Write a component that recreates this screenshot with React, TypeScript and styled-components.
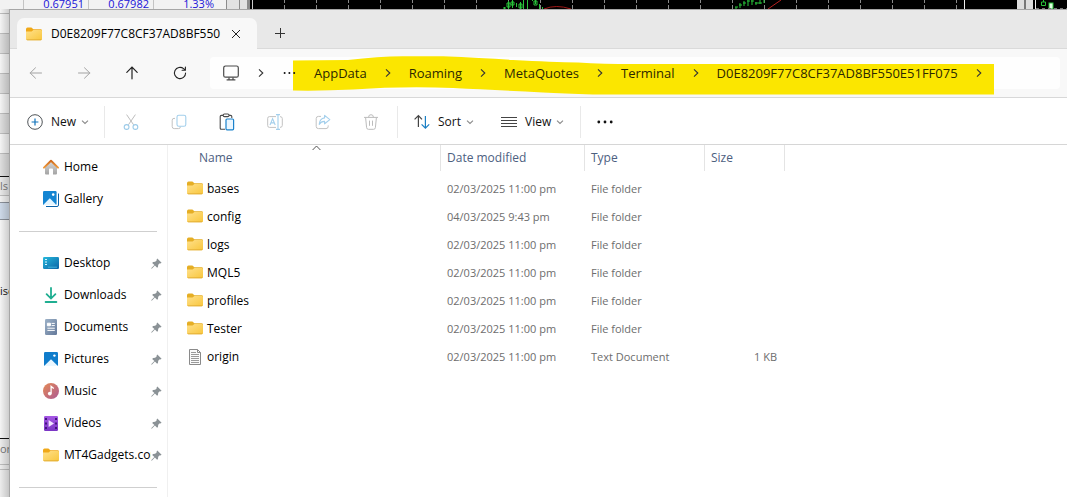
import React from 'react';
import styled, { createGlobalStyle, css } from 'styled-components';

const GlobalStyle = createGlobalStyle`
  *, *::before, *::after { box-sizing: border-box; }
  html, body, #root { height: 100%; }
  body {
    margin: 0;
    overflow: hidden;
    background: #e6e6e6;
    color: #111;
    font-family: "Open Sans", "Noto Sans", sans-serif;
    font-size: 12px;
    line-height: 16px;
  }
  button {
    border: 0;
    padding: 0;
    background: none;
    color: inherit;
    font: inherit;
  }
  svg { display: block; flex: none; }
`;

/* ---------- desktop behind the window ---------- */

const Desktop = styled.div`
  display: flex;
  flex-direction: column;
  height: 100%;
`;

const TopStrip = styled.div`
  display: flex;
  flex: none;
  height: 9px;
  overflow: hidden;
  background: #f2f2f2;
`;

const Quotes = styled.div`
  display: flex;
  flex: none;
  width: 226px;
  padding-left: 23px;
`;

const Quote = styled.span`
  width: 65px;
  height: 9px;
  padding-right: 4px;
  border-left: 1px solid #c4c4c4;
  color: #1a12d8;
  font-size: 11px;
  line-height: 8px;
  text-align: right;
`;

const Splitter = styled.div`
  flex: none;
  width: 24px;
  border: solid #8c8c8c;
  border-width: 0 3px 0 1px;
  background: linear-gradient(90deg, #e2e2e2 0 12px, #8c8c8c 12px 13px, #e2e2e2 13px);
`;

const Chart = styled.div`
  flex: 1;
  min-width: 0;
  overflow: hidden;
  background: #000;
`;

const Below = styled.div`
  display: flex;
  flex: 1;
  min-height: 0;
`;

const LeftStrip = styled.div`
  display: flex;
  flex-direction: column;
  flex: none;
  width: 9px;
  overflow: hidden;
  white-space: nowrap;
  font-size: 11px;
  position: relative;
  &::after {
    content: '';
    position: absolute;
    inset: 0;
    background: linear-gradient(90deg, rgba(0, 0, 0, 0), rgba(0, 0, 0, 0.16));
  }
`;

const Slice = styled.div<{ $h: number; $bg: string; $line?: string; $ink?: string }>`
  display: flex;
  align-items: center;
  flex: none;
  height: ${(p) => p.$h}px;
  background: ${(p) => p.$bg};
  color: ${(p) => p.$ink ?? '#111'};
  border-bottom: 1px solid ${(p) => p.$line ?? '#bdbdbd'};
`;

/* ---------- explorer window ---------- */

const Window = styled.div`
  display: flex;
  flex-direction: column;
  flex: 1;
  min-width: 0;
  border: solid #a6a6a6;
  border-width: 1px 0 0 1px;
  background: #fff;
`;

const TabBar = styled.div`
  display: flex;
  align-items: flex-end;
  flex: none;
  height: 39px;
  padding-left: 7px;
  border-bottom: 1px solid #dadada;
  background: #e8e8e8;
`;

const Tab = styled.div`
  display: flex;
  align-items: center;
  width: 240px;
  height: 31px;
  margin-bottom: -1px;
  padding: 0 16px 0 9px;
  border-radius: 7px 7px 0 0;
  background: #f8f8f8;
  color: #000;
  white-space: nowrap;
`;

const TabTitle = styled.span`
  flex: 1;
  min-width: 0;
  margin-left: 9px;
  overflow: hidden;
`;

const NewTab = styled.button`
  display: grid;
  place-items: center;
  width: 45px;
  height: 30px;
`;

const AddressBar = styled.div`
  display: flex;
  align-items: center;
  flex: none;
  height: 49px;
  padding-right: 7px;
  border-bottom: 1px solid #d8d8d8;
  background: #f8f8f8;
`;

const NavButtons = styled.div`
  display: flex;
  flex: none;
  padding: 0 6px 0 2px;
`;

const NavButton = styled.button`
  display: grid;
  place-items: center;
  width: 48px;
  height: 32px;
  color: #222;
  &:disabled { color: #a2a2a2; }
`;

const Address = styled.nav`
  display: flex;
  align-items: center;
  flex: 1;
  min-width: 0;
  height: 32px;
  padding-left: 13px;
  border-radius: 4px;
  background: #fefefe;
`;

const PathRoot = styled.div`
  display: flex;
  align-items: center;
  flex: none;
  gap: 18px;
  width: 71px;
  position: relative;
  z-index: 1;
`;

const Crumbs = styled.ol`
  display: flex;
  align-items: center;
  flex: none;
  gap: 17px;
  margin: 0;
  padding: 0 0 0 20px;
  position: relative;
  list-style: none;
  font-size: 13px;
  line-height: 20px;
`;

const Crumb = styled.li`
  display: flex;
  align-items: center;
  gap: 17px;
  position: relative;
`;

const CrumbLink = styled.a`
  color: #2c2800;
  text-decoration: none;
`;

const Marker = styled.svg`
  position: absolute;
  left: -1px;
  top: -7px;
`;

const CommandBar = styled.div`
  display: flex;
  align-items: center;
  flex: none;
  height: 47px;
  padding: 2px 0 0 17px;
  border-bottom: 1px solid #d6d6d6;
`;

const Command = styled.button<{ $w: number }>`
  display: flex;
  align-items: center;
  width: ${(p) => p.$w}px;
  height: 32px;
  color: #111;
`;

const CommandLabel = styled.span`
  margin: 0 5px 0 8px;
`;

const IconCommand = styled.button`
  display: grid;
  place-items: center;
  width: 48px;
  height: 32px;
`;

const Rule = styled.span<{ $left?: number; $right?: number }>`
  width: 1px;
  height: 32px;
  background: #e9e9e9;
  margin: 0 ${(p) => p.$right ?? 0}px 0 ${(p) => p.$left ?? 0}px;
`;

const Body = styled.div`
  display: flex;
  flex: 1;
  min-height: 0;
`;

const Sidebar = styled.nav`
  flex: none;
  width: 158px;
  padding-top: 6px;
  border-right: 1px solid #f0f0f0;
  overflow: hidden;
`;

const SideItem = styled.a`
  display: flex;
  align-items: center;
  height: 32px;
  padding: 0 5px 0 33px;
  color: #000;
  text-decoration: none;
  white-space: nowrap;
`;

const SideLabel = styled.span`
  flex: 1;
  min-width: 0;
  margin-left: 5px;
  overflow: hidden;
`;

const SideRule = styled.hr`
  height: 1px;
  margin: 16px 10px 15px 9px;
  border: 0;
  background: #cfcfcf;
`;

const Files = styled.main`
  flex: 1;
  min-width: 0;
  overflow: hidden;
`;

const FileTable = styled.table`
  width: 100%;
  table-layout: fixed;
  border-collapse: separate;
  border-spacing: 0;
  white-space: nowrap;
  thead::after {
    content: '';
    display: block;
    height: 4px;
  }
`;

const Col = styled.col<{ $w?: number }>`
  ${(p) => p.$w && css`width: ${p.$w}px;`}
`;

const HeadCell = styled.th<{ $first?: boolean; $last?: boolean }>`
  height: 26px;
  padding: 0 0 0 ${(p) => (p.$first ? 23 : 0)}px;
  border-right: ${(p) => (p.$last ? 0 : 1)}px solid #e4e4e4;
  font-weight: 400;
`;

const HeadButton = styled.button<{ $pad?: number }>`
  display: flex;
  align-items: center;
  width: 100%;
  height: 26px;
  padding-left: ${(p) => p.$pad ?? 6}px;
  position: relative;
  color: #4c607f;
`;

const SortMark = styled.svg`
  position: absolute;
  top: 0;
  left: calc(50% - 4px);
`;

const Cell = styled.td<{ $right?: boolean }>`
  height: 28px;
  padding: 0 8px 0 6px;
  color: #6d6d6d;
  font-size: 11px;
  text-align: ${(p) => (p.$right ? 'right' : 'left')};
`;

const NameCell = styled(Cell)`
  padding: 0 0 0 19px;
  color: #000;
  font-size: 12px;
`;

const FileName = styled.div`
  display: flex;
  align-items: center;
  gap: 4px;
`;

/* ---------- icons ---------- */

const Folder = ({ id, tall }: { id: string; tall?: boolean }) => (
  <svg width="16" height="16" viewBox={tall ? '0 0 16 16' : '0 1 16 16'}>
    <defs>
      <linearGradient id={id} x1="0" y1="0" x2="1" y2="1">
        <stop offset="0" stopColor="#ffe08a" />
        <stop offset="1" stopColor="#f8c63c" />
      </linearGradient>
    </defs>
    <path d="M0 3.2Q0 1.6 1.5 1.6H5.4L7.4 3.2H14.6Q16 3.2 16 4.6V8H0Z" fill={tall ? '#f0a818' : '#e5ae25'} />
    <path d="M0 5.4H5.6L7.4 4.1H15Q16 4.1 16 5.2V13Q16 14.3 14.7 14.3H1.3Q0 14.3 0 13Z" fill={`url(#${id})`} />
    <path d="M.4 13.6Q.8 14.3 1.4 14.3H14.6Q15.3 14.3 15.7 13.6Z" fill="#dca32a" />
  </svg>
);

const TextFile = () => (
  <svg width="16" height="16" viewBox="0 0 16 16">
    <path d="M2.5.5H10.5L13.5 3.5V15.5H2.5Z" fill="#fafafa" stroke="#8a8a8a" />
    <path d="M10.5.5V3.5H13.5" fill="none" stroke="#8a8a8a" />
    <path d="M4 3.5H9M4 5.5H12M4 7.5H12M4 9.5H12M4 11.5H12M4 13.5H12" stroke="#9a9a9a" />
  </svg>
);

const Chevron = ({ dir, size = 8, color = '#333' }: { dir: 'right' | 'down'; size?: number; color?: string }) => (
  <svg width={size} height={size} viewBox="0 0 8 8" fill="none" stroke={color} strokeWidth="1.1">
    <path d={dir === 'right' ? 'M2 0.4L5.8 4L2 7.6' : 'M1 2.6L4 5.4L7 2.6'} />
  </svg>
);

const Pin = () => (
  <svg width="11" height="11" viewBox="0 0 11 11" fill="#8b9296">
    <path d="M6.3.4L10.6 4.7L9.4 5.4L8.8 5.2L7.2 6.8L7 8.9L6.1 9.8L3.9 7.6L1 10.6L.3 10.7L.4 10L3.4 7.1L1.2 4.9L2.1 4L4.2 3.8L5.8 2.2L5.6 1.6Z" />
  </svg>
);

const sideIcons: Record<string, React.ReactNode> = {
  Home: (
    <svg width="16" height="16" viewBox="0 0 16 16">
      <defs>
        <linearGradient id="house" x1="0" y1="0" x2="0" y2="1">
          <stop offset="0" stopColor="#d8d8d8" />
          <stop offset="1" stopColor="#a3a3a3" />
        </linearGradient>
        <linearGradient id="roof" x1="0" y1="0" x2="0" y2="1">
          <stop offset="0" stopColor="#cf6a1c" />
          <stop offset="1" stopColor="#f09a3a" />
        </linearGradient>
      </defs>
      <path d="M8 2.5L14 8V14.6Q14 15.6 13 15.6H10V10.4Q10 9.6 9.2 9.6H6.8Q6 9.6 6 10.4V15.6H3Q2 15.6 2 14.6V8Z" fill="url(#house)" />
      <path d="M1 8.6L8 1.8L15 8.6" fill="none" stroke="url(#roof)" strokeWidth="2" strokeLinecap="round" strokeLinejoin="round" />
    </svg>
  ),
  Gallery: (
    <svg width="16" height="16" viewBox="0 0 16 16">
      <path d="M3 15.5H14Q15.5 15.5 15.5 14V2.5" fill="none" stroke="#0b62a8" strokeWidth="1" />
      <rect width="13.6" height="14" rx="1.2" fill="#1485d2" />
      <path d="M.6 13.6L6.8 7.2L13 13.6Q12.8 14 12.4 14H1.2Q.8 14 .6 13.6Z" fill="#e4f5ff" />
      <circle cx="10.2" cy="3.6" r="1.3" fill="#fff" />
    </svg>
  ),
  Desktop: (
    <svg width="16" height="16" viewBox="0 0 16 16">
      <defs>
        <linearGradient id="screen" x1="0" y1="0" x2="1" y2="1">
          <stop offset="0" stopColor="#26b9dc" />
          <stop offset="1" stopColor="#0b62a6" />
        </linearGradient>
      </defs>
      <rect y="2" width="16" height="12" rx="1.2" fill="url(#screen)" />
      <path d="M2 4.5H4M2 7H4M2 9.5H4" stroke="#d8f6ff" strokeWidth="1.1" />
      <path d="M5 12.2H14" stroke="#4fbfe2" strokeWidth=".8" />
    </svg>
  ),
  Downloads: (
    <svg width="16" height="16" viewBox="0 0 16 16" fill="none" stroke="#1fae91" strokeWidth="1.8" strokeLinecap="round">
      <path d="M8 1V11.4M3.6 7.2L8 11.6L12.4 7.2M2.6 15H13.4" />
    </svg>
  ),
  Documents: (
    <svg width="16" height="16" viewBox="0 0 16 16">
      <defs>
        <linearGradient id="sheet" x1="0" y1="0" x2="1" y2="1">
          <stop offset="0" stopColor="#9db2c8" />
          <stop offset="1" stopColor="#64799a" />
        </linearGradient>
      </defs>
      <rect x="2" width="12" height="16" rx="1.2" fill="url(#sheet)" />
      <path d="M4.4 4.2H7.4V6.8H4.4ZM8.6 4.4H11.8M8.6 6.6H11.8M4.4 9.2H11.8M4.4 11.4H11.8" fill="#fff" stroke="#fff" />
    </svg>
  ),
  Pictures: (
    <svg width="16" height="16" viewBox="0 0 16 16">
      <rect x="1" y="1" width="14" height="14" rx="1.2" fill="#0f7ccb" />
      <path d="M1.6 14.5L8 8.2L14.4 14.5Q14.2 15 13.8 15H2.2Q1.8 15 1.6 14.5Z" fill="#eaf7ff" />
      <circle cx="11.4" cy="4.6" r="1.2" fill="#fff" />
    </svg>
  ),
  Music: (
    <svg width="16" height="16" viewBox="0 0 16 16">
      <defs>
        <linearGradient id="disc" x1="0" y1="0" x2="1" y2="1">
          <stop offset="0" stopColor="#e58a55" />
          <stop offset="1" stopColor="#ac5a94" />
        </linearGradient>
      </defs>
      <circle cx="8" cy="8" r="8" fill="url(#disc)" />
      <circle cx="6.8" cy="10.6" r="1.9" fill="#fff" />
      <path d="M8.1 10.6V3.4L10.8 5.4" fill="none" stroke="#fff" strokeWidth="1.3" />
    </svg>
  ),
  Videos: (
    <svg width="16" height="16" viewBox="0 0 16 16">
      <defs>
        <linearGradient id="film" x1="0" y1="0" x2="0" y2="1">
          <stop offset="0" stopColor="#a557e4" />
          <stop offset="1" stopColor="#7a35c4" />
        </linearGradient>
      </defs>
      <rect x="1" y="1" width="14" height="15" rx="1.2" fill="url(#film)" />
      <path d="M2 3H4V5H2ZM2 7.5H4V9.5H2ZM2 12H4V14H2ZM12 3H14V5H12ZM12 7.5H14V9.5H12ZM12 12H14V14H12Z" fill="#43157e" />
      <path d="M5.6 5L11 8.5L5.6 12Z" fill="#f1e4ff" />
    </svg>
  ),
  'MT4Gadgets.com': <Folder id="side-folder" tall />,
};

const BackIcon = ({ flip }: { flip?: boolean }) => (
  <svg width="14" height="14" viewBox="0 0 14 14" fill="none" stroke="currentColor" strokeLinecap="round">
    <path d={flip ? 'M1.5 7H12.8M7.5 1.8L12.8 7L7.5 12.2' : 'M12.5 7H1.2M6.5 1.8L1.2 7L6.5 12.2'} />
  </svg>
);

const UpIcon = () => (
  <svg width="14" height="14" viewBox="0 0 14 14" fill="none" stroke="currentColor" strokeWidth="1.2" strokeLinecap="round">
    <path d="M7 12.8V1.4M1.8 6.4L7 1.2L12.2 6.4" />
  </svg>
);

const RefreshIcon = () => (
  <svg width="14" height="14" viewBox="0 0 14 14" fill="none" stroke="currentColor" strokeWidth="1.1" strokeLinecap="round">
    <path d="M12.6 7A5.6 5.6 0 1 1 10.6 2.7L12.3 4.2M12.4 1V4.3H9.1" />
  </svg>
);

const MonitorIcon = () => (
  <svg width="16" height="16" viewBox="0 0 16 16" fill="none" stroke="#4a4a4a" strokeWidth="1.2">
    <rect x=".7" y="1" width="14.6" height="11.2" rx="1.8" />
    <path d="M6 12.4V14.6M10 12.4V14.6M3.6 14.8H12.4" />
  </svg>
);

const Dots = ({ wide }: { wide?: boolean }) => (
  <svg width="16" height="4" viewBox="0 0 16 4" fill="#111">
    {(wide ? [1.8, 8, 14.2] : [1.6, 6.4, 11.2]).map((x) => (
      <circle key={x} cx={x} cy="2" r={wide ? 1.4 : 1} />
    ))}
  </svg>
);

const NewIcon = () => (
  <svg width="16" height="16" viewBox="0 0 16 16" fill="none">
    <circle cx="8" cy="8" r="7.3" stroke="#4f5458" />
    <path d="M8 4.6V11.4M4.6 8H11.4" stroke="#1173bb" strokeWidth="1.2" />
  </svg>
);

const CutIcon = () => (
  <svg width="16" height="16" viewBox="0 0 16 16" fill="none">
    <path d="M3.6 .6L10.6 10.8M12.4 .6L5.4 10.8" stroke="#bdbdbd" />
    <circle cx="3.6" cy="13" r="2.4" stroke="#9ccbe9" strokeWidth="1.1" />
    <circle cx="12.4" cy="13" r="2.4" stroke="#9ccbe9" strokeWidth="1.1" />
  </svg>
);

const CopyIcon = () => (
  <svg width="16" height="16" viewBox="0 0 16 16" fill="none">
    <path d="M4 4.4H3Q1.2 4.4 1.2 6.2V12.6Q1.2 14.6 3.2 14.6H7.6Q9.4 14.6 9.4 12.8" stroke="#c2c2c2" />
    <rect x="6" y="1.2" width="8.8" height="11" rx="1.8" stroke="#a3cfec" strokeWidth="1.1" />
  </svg>
);

const PasteIcon = () => (
  <svg width="16" height="18" viewBox="0 0 16 18" fill="none">
    <path d="M6 16.3H2.4Q1.2 16.3 1.2 15.1V3.6Q1.2 2.4 2.4 2.4H4M10 2.4H11.6Q12.8 2.4 12.8 3.6V5" stroke="#4b4b4b" strokeWidth="1.1" />
    <rect x="4.2" y="1" width="5.8" height="2.6" rx="1.2" stroke="#4b4b4b" strokeWidth="1.1" />
    <rect x="7" y="6" width="7.6" height="10.8" rx="1" stroke="#1a82cc" strokeWidth="1.2" fill="#eaf6ff" />
  </svg>
);

const RenameIcon = () => (
  <svg width="16" height="16" viewBox="0 0 16 16" fill="none">
    <path d="M9 2.6H2.4Q.7 2.6 .7 4.3V11.6Q.7 13.4 2.4 13.4H9M13 2.6Q15.3 2.6 15.3 4.6V11.4Q15.3 13.4 13 13.4" stroke="#c2c2c2" />
    <path d="M3 11L5.6 4.6L8.2 11M3.9 8.9H7.3M11 .6V15.4M9 .6H13M9 15.4H13" stroke="#a3cfec" strokeWidth="1.1" />
  </svg>
);

const ShareIcon = () => (
  <svg width="16" height="16" viewBox="0 0 16 16" fill="none">
    <path d="M6 2.4H3.4Q1.2 2.4 1.2 4.6V12.4Q1.2 14.6 3.4 14.6H11Q13.2 14.6 13.2 12.4V11.4" stroke="#c2c2c2" />
    <path d="M9.6 1.4L14.8 5.6L9.6 9.8V7.4Q6.2 7.2 4.2 10.4Q4.6 4.6 9.6 3.9Z" stroke="#a3cfec" strokeWidth="1.1" strokeLinejoin="round" />
  </svg>
);

const DeleteIcon = () => (
  <svg width="16" height="16" viewBox="0 0 16 16" fill="none" stroke="#bcbcbc">
    <path d="M1 3.4H15M5.6 3.2Q5.6 .7 8 .7T10.4 3.2M2.6 3.6L3.6 13.6Q3.8 15.3 5.4 15.3H10.6Q12.2 15.3 12.4 13.6L13.4 3.6M6.5 6.6V11.8M9.5 6.6V11.8" />
  </svg>
);

const SortIcon = () => (
  <svg width="16" height="16" viewBox="0 0 16 16" fill="none" strokeWidth="1.2">
    <path d="M4.4 13V1.8M.6 5.4L4.4 1.6L8 5.4" stroke="#444" />
    <path d="M11.4 2V14M7.6 10.4L11.4 14.2L15.2 10.4" stroke="#1a7fc4" />
  </svg>
);

const ViewIcon = () => (
  <svg width="16" height="16" viewBox="0 0 16 16" stroke="#444">
    <path d="M0 3.5H16M0 6.5H16M0 9.5H16M0 12.5H16" />
  </svg>
);

const gridLines = Array.from({ length: 23 }, (_, i) => 34 + i * 32).filter((x) => x < 710);

const ChartDrawing = () => (
  <svg width="817" height="9" viewBox="0 0 817 9" fill="none">
    <rect x="2" y="0" width="1" height="9" fill="#ccc" />
    {gridLines.map((x) => (
      <path key={x} d={`M${x + 0.5} 0V3M${x + 0.5} 5V9`} stroke="#8a8a8a" />
    ))}
    <path d="M254.5 7V9M258.5 1V9M262.5 0V8M266.5 3V7M270.5 2V9M273.5 0V9M277.5 0V9M282.5 0V1M285.5 0V4" stroke="#28c43a" />
    <path d="M253 8H256M257 3H260V7H257ZM261 2H264V5H261ZM269 4H272V8H269ZM284 1H287V5H284ZM289.5 4V9M292.5 7V9" stroke="#28c43a" />
    <path d="M294 9Q306 4 321 9" stroke="#a01818" />
    <path d="M486 7V9M490 3V8M494 1V6M498 0V6M502 0V5M506 2V5M510 0V4M514 0V3M485 7H488M489 5H492M493 3H496M497 1H500M501 1H504M505 3H512" stroke="#28c43a" />
    <path d="M518 9L531 0" stroke="#b81f1f" />
    <rect x="714" width="1" height="9" fill="#eee" />
    <rect x="767" width="16" height="9" fill="#dedede" />
    <rect x="774" width="2" height="9" fill="#777" />
    <rect x="785" width="1" height="9" fill="#eee" />
    <path d="M791.5 2H795.5V5.5H791.5ZM793.5 0V2" stroke="#28c43a" />
    <rect x="799" y="3" width="4" height="6" fill="#dfffdf" stroke="#28c43a" />
    <path d="M786 8.5H817" stroke="#777" strokeDasharray="3 3" />
  </svg>
);

/* ---------- data ---------- */

const crumbs = ['AppData', 'Roaming', 'MetaQuotes', 'Terminal', 'D0E8209F77C8CF37AD8BF550E51FF075'];

const pinned = ['Desktop', 'Downloads', 'Documents', 'Pictures', 'Music', 'Videos', 'MT4Gadgets.com'];

const files = [
  { name: 'bases', date: '02/03/2025 11:00 pm', type: 'File folder', size: '' },
  { name: 'config', date: '04/03/2025 9:43 pm', type: 'File folder', size: '' },
  { name: 'logs', date: '02/03/2025 11:00 pm', type: 'File folder', size: '' },
  { name: 'MQL5', date: '02/03/2025 11:00 pm', type: 'File folder', size: '' },
  { name: 'profiles', date: '02/03/2025 11:00 pm', type: 'File folder', size: '' },
  { name: 'Tester', date: '02/03/2025 11:00 pm', type: 'File folder', size: '' },
  { name: 'origin', date: '02/03/2025 11:00 pm', type: 'Text Document', size: '1 KB' },
];

const commands: [string, React.ReactNode][] = [
  ['Cut', <CutIcon />],
  ['Copy', <CopyIcon />],
  ['Paste', <PasteIcon />],
  ['Rename', <RenameIcon />],
  ['Share', <ShareIcon />],
  ['Delete', <DeleteIcon />],
];

export default function App() {
  return (
    <Desktop>
      <GlobalStyle />
      <TopStrip>
        <Quotes>
          <Quote>0.67951</Quote>
          <Quote>0.67982</Quote>
          <Quote>1.33%</Quote>
        </Quotes>
        <Splitter />
        <Chart><ChartDrawing /></Chart>
      </TopStrip>
      <Below>
        <LeftStrip>
          <Slice $h={5} $bg="#f4f4f4" />
          <Slice $h={20} $bg="#f4f4f4" />
          <Slice $h={20} $bg="#dedede" />
          <Slice $h={20} $bg="#f4f4f4" />
          <Slice $h={20} $bg="#dedede" />
          <Slice $h={20} $bg="#f4f4f4" />
          <Slice $h={20} $bg="#dedede" />
          <Slice $h={20} $bg="#f4f4f4" />
          <Slice $h={23} $bg="#dedede" $line="#111" />
          <Slice $h={19} $bg="#e8e8e8" $ink="#777">ls</Slice>
          <Slice $h={7} $bg="#f0f0f0" $line="#8a9099" />
          <Slice $h={17} $bg="#cdd9e8" $line="#8a9099" />
          <Slice $h={143} $bg="#f4f4f4" $line="#f4f4f4">isc</Slice>
          <Slice $h={76} $bg="#f4f4f4" $line="#111" />
          <Slice $h={20} $bg="#ececec" $line="#ececec" $ink="#777">ori</Slice>
          <Slice $h={6} $bg="#ececec" />
          <Slice $h={5} $bg="#ececec" />
          <Slice $h={40} $bg="#ececec" />
        </LeftStrip>
        <Window>
          <TabBar>
            <Tab>
              <Folder id="tab-folder" tall />
              <TabTitle>D0E8209F77C8CF37AD8BF550</TabTitle>
              <button aria-label="Close tab">
                <svg width="10" height="10" viewBox="0 0 10 10" stroke="#222">
                  <path d="M1 1L9 9M9 1L1 9" />
                </svg>
              </button>
            </Tab>
            <NewTab aria-label="New tab">
              <svg width="10" height="10" viewBox="0 0 10 10" stroke="#333">
                <path d="M0 5.5H10M5.5 0V10" />
              </svg>
            </NewTab>
          </TabBar>
          <AddressBar>
            <NavButtons>
              <NavButton aria-label="Back" disabled><BackIcon /></NavButton>
              <NavButton aria-label="Forward" disabled><BackIcon flip /></NavButton>
              <NavButton aria-label="Up"><UpIcon /></NavButton>
              <NavButton aria-label="Refresh"><RefreshIcon /></NavButton>
            </NavButtons>
            <Address aria-label="Address">
              <PathRoot>
                <MonitorIcon />
                <Chevron dir="right" />
                <Dots />
              </PathRoot>
              <Crumbs>
                <Marker width="701" height="39" viewBox="0 0 701 39" fill="#fbe600">
                  <path d="M0 4.5L55 4Q85 .5 110 .3L150 .3Q190 2 220 4Q260 6 285 6.5Q310 8 340 8H701V38.5H300Q270 37.5 250 36.5Q200 34 160 32Q110 30 60 33.5Q30 35 0 34.5Z" />
                </Marker>
                {crumbs.map((c) => (
                  <Crumb key={c}>
                    <CrumbLink href="#">{c}</CrumbLink>
                    <Chevron dir="right" />
                  </Crumb>
                ))}
              </Crumbs>
            </Address>
          </AddressBar>
          <CommandBar>
            <Command $w={77}>
              <NewIcon />
              <CommandLabel>New</CommandLabel>
              <Chevron dir="down" color="#8a8a8a" />
            </Command>
            <Rule $right={2} />
            {commands.map(([label, icon]) => (
              <IconCommand key={label} aria-label={label} disabled={label !== 'Paste'}>{icon}</IconCommand>
            ))}
            <Rule $left={2} $right={16} />
            <Command $w={87}>
              <SortIcon />
              <CommandLabel>Sort</CommandLabel>
              <Chevron dir="down" color="#8a8a8a" />
            </Command>
            <Command $w={79}>
              <ViewIcon />
              <CommandLabel>View</CommandLabel>
              <Chevron dir="down" color="#8a8a8a" />
            </Command>
            <Rule />
            <IconCommand aria-label="More options"><Dots wide /></IconCommand>
          </CommandBar>
          <Body>
            <Sidebar aria-label="Places">
              {['Home', 'Gallery'].map((name) => (
                <SideItem key={name} href="#">
                  {sideIcons[name]}
                  <SideLabel>{name}</SideLabel>
                </SideItem>
              ))}
              <SideRule />
              {pinned.map((name) => (
                <SideItem key={name} href="#">
                  {sideIcons[name]}
                  <SideLabel>{name}</SideLabel>
                  <Pin />
                </SideItem>
              ))}
              <SideRule />
            </Sidebar>
            <Files>
              <FileTable>
                <colgroup>
                  <Col $w={273} />
                  <Col $w={144} />
                  <Col $w={120} />
                  <Col $w={80} />
                  <Col />
                </colgroup>
                <thead>
                  <tr>
                    <HeadCell $first>
                      <HeadButton $pad={8}>
                        Name
                        <SortMark width="9" height="6" viewBox="0 0 9 6" fill="none" stroke="#555">
                          <path d="M.6 5L4.5 1L8.4 5" />
                        </SortMark>
                      </HeadButton>
                    </HeadCell>
                    <HeadCell><HeadButton>Date modified</HeadButton></HeadCell>
                    <HeadCell><HeadButton>Type</HeadButton></HeadCell>
                    <HeadCell><HeadButton>Size</HeadButton></HeadCell>
                    <HeadCell $last />
                  </tr>
                </thead>
                <tbody>
                  {files.map((f) => (
                    <tr key={f.name}>
                      <NameCell>
                        <FileName>
                          {f.size ? <TextFile /> : <Folder id={`folder-${f.name}`} />}
                          {f.name}
                        </FileName>
                      </NameCell>
                      <Cell>{f.date}</Cell>
                      <Cell>{f.type}</Cell>
                      <Cell $right>{f.size}</Cell>
                      <Cell />
                    </tr>
                  ))}
                </tbody>
              </FileTable>
            </Files>
          </Body>
        </Window>
      </Below>
    </Desktop>
  );
}
